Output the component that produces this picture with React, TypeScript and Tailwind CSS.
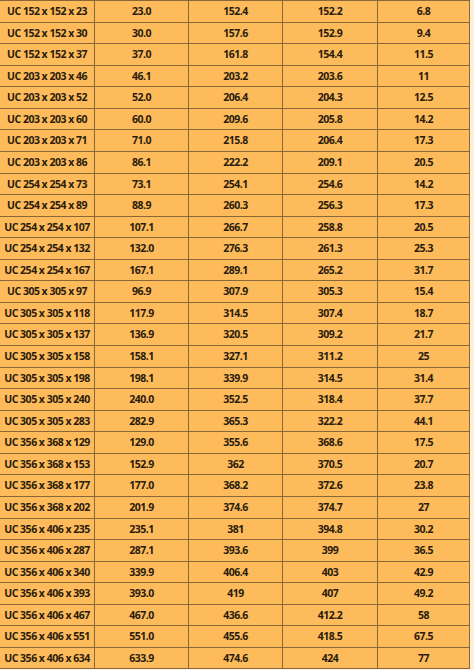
const rows: string[][] = [
  ["UC 152 x 152 x 23", "23.0", "152.4", "152.2", "6.8"],
  ["UC 152 x 152 x 30", "30.0", "157.6", "152.9", "9.4"],
  ["UC 152 x 152 x 37", "37.0", "161.8", "154.4", "11.5"],
  ["UC 203 x 203 x 46", "46.1", "203.2", "203.6", "11"],
  ["UC 203 x 203 x 52", "52.0", "206.4", "204.3", "12.5"],
  ["UC 203 x 203 x 60", "60.0", "209.6", "205.8", "14.2"],
  ["UC 203 x 203 x 71", "71.0", "215.8", "206.4", "17.3"],
  ["UC 203 x 203 x 86", "86.1", "222.2", "209.1", "20.5"],
  ["UC 254 x 254 x 73", "73.1", "254.1", "254.6", "14.2"],
  ["UC 254 x 254 x 89", "88.9", "260.3", "256.3", "17.3"],
  ["UC 254 x 254 x 107", "107.1", "266.7", "258.8", "20.5"],
  ["UC 254 x 254 x 132", "132.0", "276.3", "261.3", "25.3"],
  ["UC 254 x 254 x 167", "167.1", "289.1", "265.2", "31.7"],
  ["UC 305 x 305 x 97", "96.9", "307.9", "305.3", "15.4"],
  ["UC 305 x 305 x 118", "117.9", "314.5", "307.4", "18.7"],
  ["UC 305 x 305 x 137", "136.9", "320.5", "309.2", "21.7"],
  ["UC 305 x 305 x 158", "158.1", "327.1", "311.2", "25"],
  ["UC 305 x 305 x 198", "198.1", "339.9", "314.5", "31.4"],
  ["UC 305 x 305 x 240", "240.0", "352.5", "318.4", "37.7"],
  ["UC 305 x 305 x 283", "282.9", "365.3", "322.2", "44.1"],
  ["UC 356 x 368 x 129", "129.0", "355.6", "368.6", "17.5"],
  ["UC 356 x 368 x 153", "152.9", "362", "370.5", "20.7"],
  ["UC 356 x 368 x 177", "177.0", "368.2", "372.6", "23.8"],
  ["UC 356 x 368 x 202", "201.9", "374.6", "374.7", "27"],
  ["UC 356 x 406 x 235", "235.1", "381", "394.8", "30.2"],
  ["UC 356 x 406 x 287", "287.1", "393.6", "399", "36.5"],
  ["UC 356 x 406 x 340", "339.9", "406.4", "403", "42.9"],
  ["UC 356 x 406 x 393", "393.0", "419", "407", "49.2"],
  ["UC 356 x 406 x 467", "467.0", "436.6", "412.2", "58"],
  ["UC 356 x 406 x 551", "551.0", "455.6", "418.5", "67.5"],
  ["UC 356 x 406 x 634", "633.9", "474.6", "424", "77"],
];

export default function App() {
  return (
    <div className="w-[474px] h-[670px] overflow-hidden bg-[#fcefdc]">
      <div
        className="w-[470px] bg-[#fdbb5c] border-t border-[#8a6737] text-[10.5px] font-bold tracking-[-0.5px] text-[#2b1b0b]"
        style={{ fontFamily: '"Open Sans", "Noto Sans", sans-serif' }}
      >
        {rows.map((row) => (
          <div
            key={row[0]}
            className="grid grid-cols-[95px_94px_94px_95px_92px] h-[21.57px] border-b border-[#8a6737]"
          >
            {row.map((cell, i) => (
              <div
                key={i}
                className="flex items-center justify-center border-r border-[#8a6737] whitespace-nowrap leading-none"
              >
                {cell}
              </div>
            ))}
          </div>
        ))}
      </div>
    </div>
  );
}
